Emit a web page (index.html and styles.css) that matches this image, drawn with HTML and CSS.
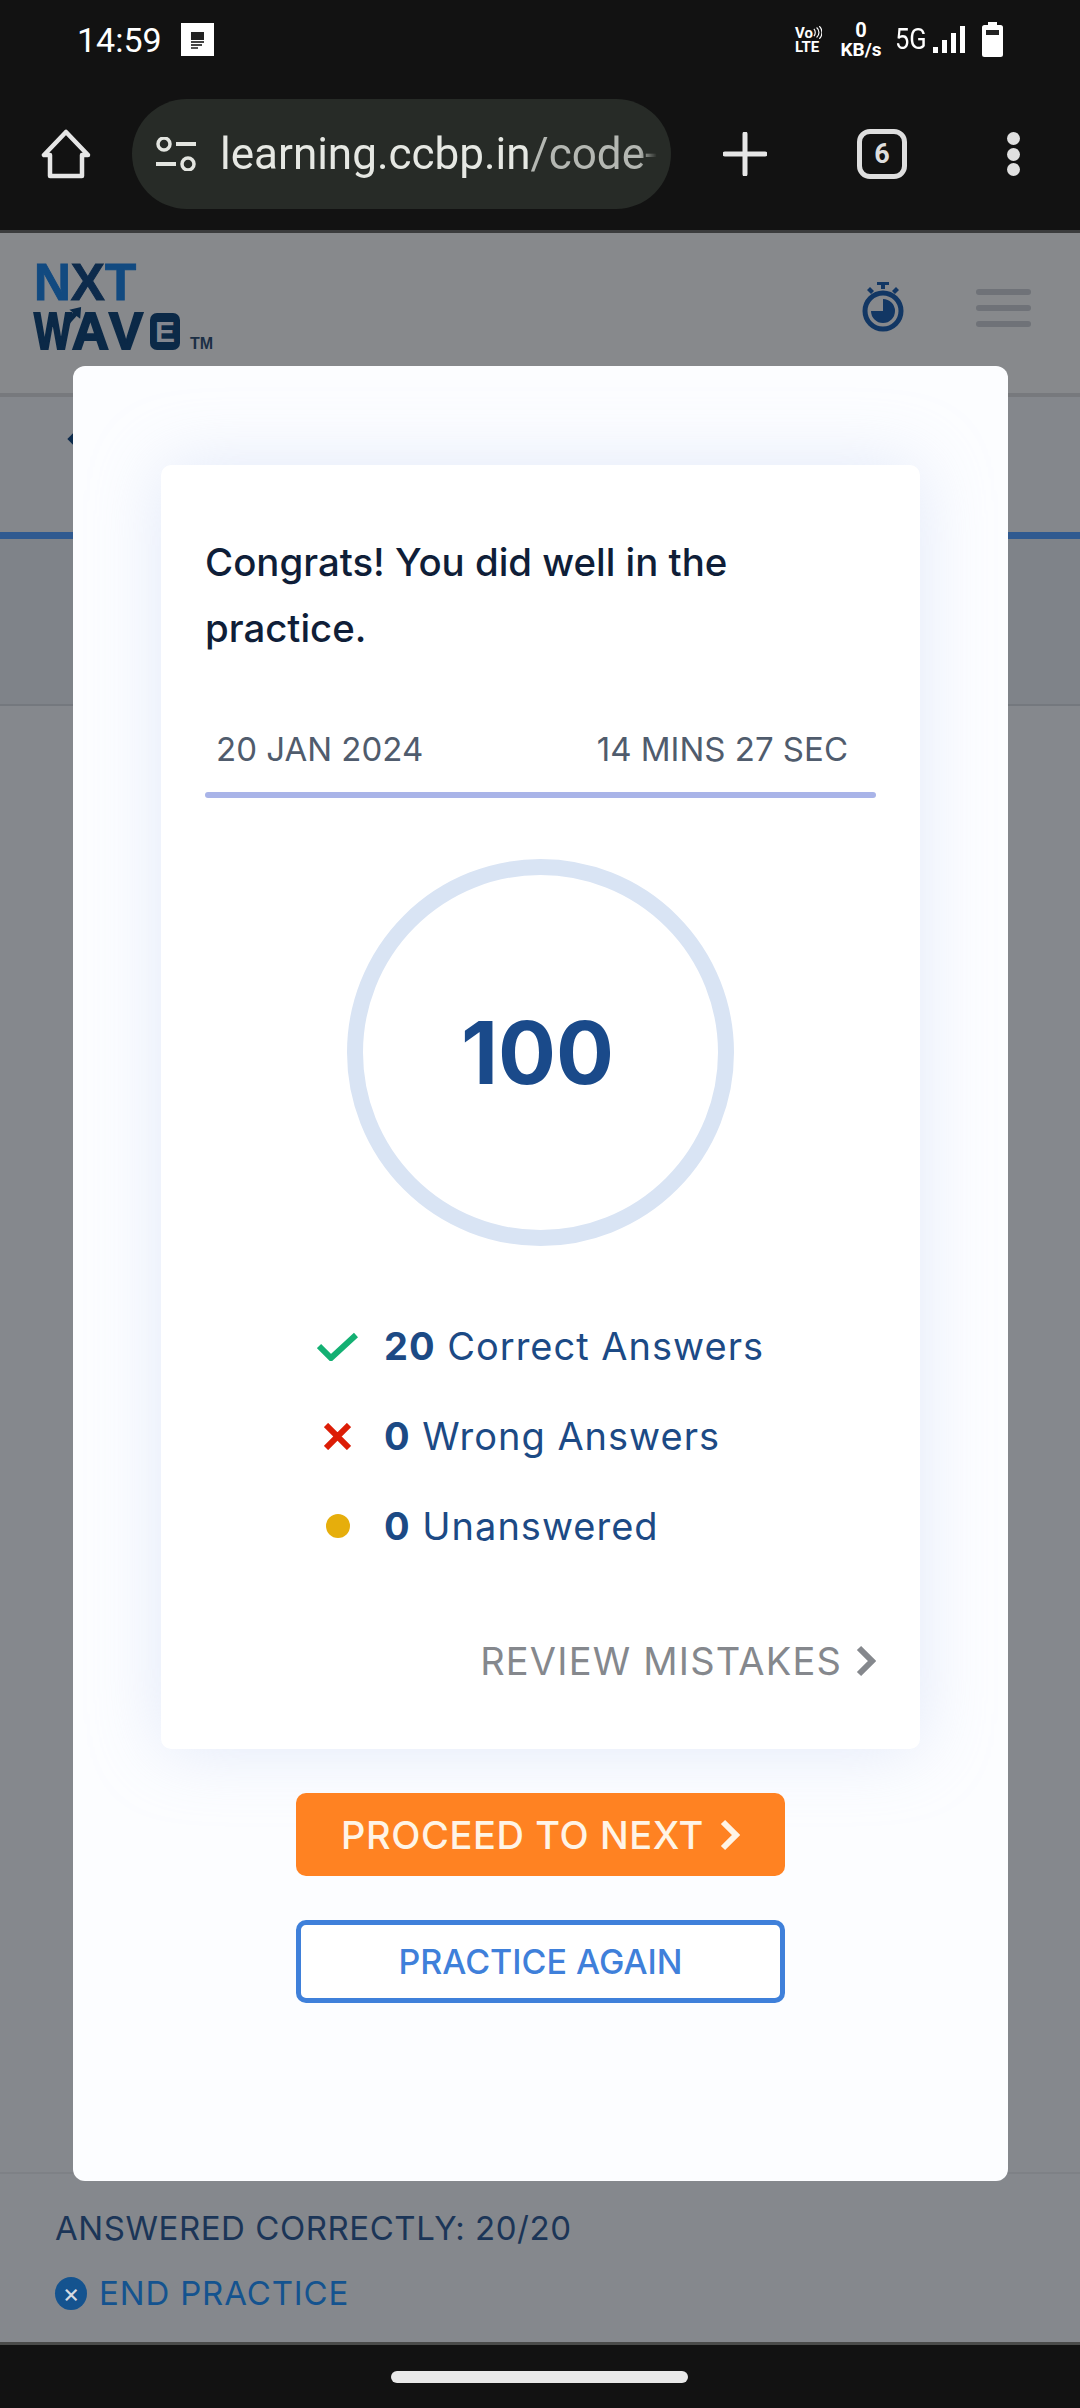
FILE: index.html
```html
<!DOCTYPE html>
<html lang="en">
<head>
    <meta charset="UTF-8">
    <title>Practice result</title>
    <link rel="stylesheet" href="styles.css">
</head>
<body>
<div class="phone">
    <div class="status-bar">
        <span class="status-time">14:59</span>
        <svg class="status-note" viewBox="0 0 33 33"><rect width="33" height="33" fill="#fff"/><rect x="10" y="9" width="13" height="8" fill="#222"/><rect x="10" y="18" width="13" height="2" fill="#444"/><rect x="10" y="21" width="11" height="2" fill="#444"/><rect x="10" y="24" width="7" height="2" fill="#555"/></svg>
        <div class="status-right">
            <div class="volte"><span class="volte-top">Vo<svg class="volte-waves" viewBox="0 0 10 14"><path d="M1 3c2 2 2 6 0 8M4 1.500c3.500 3 3.500 8 0 11M7 0c4 4 4 10 0 14" fill="none" stroke="#fff" stroke-width="1.300"/></svg></span><span>LTE</span></div>
            <div class="speed"><span class="speed-num">0</span><span>KB/s</span></div>
            <span class="net">5G</span>
            <div class="signal"><i class="bar bar1"></i><i class="bar bar2"></i><i class="bar bar3"></i><i class="bar bar4"></i></div>
            <svg class="battery" viewBox="0 0 21 35"><path d="M6 0h9v3h3.500a2.500 2.500 0 0 1 2.500 2.500v27a2.500 2.500 0 0 1-2.500 2.500h-16a2.500 2.500 0 0 1-2.500-2.500v-27a2.500 2.500 0 0 1 2.500-2.500h3.500z" fill="#fff"/><rect x="4" y="8" width="13" height="5" fill="#222"/></svg>
        </div>
    </div>

    <div class="toolbar">
        <svg class="home-icon" viewBox="0 0 50 50"><path d="M25 3L3 26h6v21h32V26h6z" fill="none" stroke="#e6e6e6" stroke-width="4.500" stroke-linejoin="round"/></svg>
        <div class="url-pill">
            <svg class="tune-icon" viewBox="0 0 42 34"><circle cx="9" cy="7" r="6" fill="none" stroke="#e3e5e0" stroke-width="3.500"/><rect x="21" y="5" width="20" height="4" fill="#e3e5e0"/><rect x="1" y="25" width="20" height="4" fill="#e3e5e0"/><circle cx="33" cy="27" r="6" fill="none" stroke="#e3e5e0" stroke-width="3.500"/></svg>
            <div class="url-text"><span class="url-host">learning.ccbp.in</span><span class="url-path">/code-</span></div>
        </div>
        <svg class="plus-icon" viewBox="0 0 44 44"><path d="M22 2v40M2 22h40" stroke="#e6e6e6" stroke-width="5" stroke-linecap="round"/></svg>
        <div class="tab-count">6</div>
        <div class="more-dots"><i></i><i></i><i></i></div>
    </div>

    <div class="page">
        <header class="site-header">
            <div class="logo">
                <div class="logo-nxt">N<span class="logo-x">X</span>T</div>
                <div class="logo-wave">
                    <span class="logo-w"><span class="logo-w-inner">W</span></span><span class="logo-a">A</span><span class="logo-v">V</span><span class="logo-e">E</span><span class="logo-tm">TM</span>
                    <svg class="logo-arrow" viewBox="0 0 20 20"><path d="M19 0l-1 13-4-3-8 9-5-3 9-10-4-3z" fill="#0b2947"/></svg>
                </div>
            </div>
            <div class="header-actions">
                <svg class="timer-icon" viewBox="0 0 42 50"><path d="M15 0h12v3h-4v4h-4V3h-4z" fill="#123764"/><path d="M5 8l3-3 4 4-3 3zM37 8l-3-3-4 4 3 3z" fill="#123764"/><circle cx="21" cy="29" r="18" fill="none" stroke="#123764" stroke-width="5"/><path d="M21 17a12 12 0 1 1-12 12h12z" fill="#123764"/></svg>
                <div class="menu-icon"><i></i><i></i><i></i></div>
            </div>
        </header>
        <div class="sub-bar"><span class="back-arrow"></span></div>
        <div class="question-bar"></div>
        <div class="page-body"></div>
        <footer class="page-footer">
            <div class="footer-score">ANSWERED CORRECTLY: 20/20</div>
            <div class="end-practice">
                <span class="end-icon">×</span>
                <span>END PRACTICE</span>
            </div>
        </footer>

        <div class="modal">
            <div class="result-card">
                <p class="result-title">Congrats! You did well in the practice.</p>
                <div class="result-meta">
                    <span>20 JAN 2024</span>
                    <span>14 MINS 27 SEC</span>
                </div>
                <div class="score-ring">100</div>
                <ul class="stats">
                    <li class="stat">
                        <span class="stat-icon"><svg class="icon-check" viewBox="0 0 41 29"><path d="M2 14l12 12L39 3" fill="none" stroke="#14b073" stroke-width="6"/></svg></span>
                        <span><b>20</b> Correct Answers</span>
                    </li>
                    <li class="stat">
                        <span class="stat-icon"><svg class="icon-cross" viewBox="0 0 27 27"><path d="M2 2l23 23M25 2L2 25" fill="none" stroke="#dc1d06" stroke-width="6"/></svg></span>
                        <span><b>0</b> Wrong Answers</span>
                    </li>
                    <li class="stat">
                        <span class="stat-icon"><span class="icon-dot"></span></span>
                        <span><b>0</b> Unanswered</span>
                    </li>
                </ul>
                <div class="review-link">
                    <span>REVIEW MISTAKES</span>
                    <svg class="chevron" viewBox="0 0 20 32"><path d="M3 3l13 13L3 29" fill="none" stroke="#85888d" stroke-width="6"/></svg>
                </div>
            </div>
            <button class="btn btn-next">PROCEED TO NEXT <svg class="chevron" viewBox="0 0 20 32"><path d="M3 3l13 13L3 29" fill="none" stroke="#fff4e6" stroke-width="6"/></svg></button>
            <button class="btn btn-again">PRACTICE AGAIN</button>
        </div>
    </div>

    <div class="nav-bar"><div class="nav-handle"></div></div>
</div>
</body>
</html>
```

FILE: styles.css
```css
html, body {
    margin: 0;
    padding: 0;
    background-color: #121212;
}

.phone {
    width: 1080px;
    height: 2408px;
    display: flex;
    flex-direction: column;
    overflow: hidden;
    font-family: Inter, "Noto Sans", sans-serif;
}

/* status bar */
.status-bar {
    height: 78px;
    display: flex;
    align-items: center;
    padding: 0 77px;
    color: #fff;
    font-family: Roboto, sans-serif;
    box-sizing: border-box;
}

.status-time {
    font-size: 34px;
    line-height: 33px;
    margin-top: 2px;
}

.status-note {
    width: 33px;
    height: 33px;
    margin-left: 19px;
    margin-top: 1px;
}

.status-right {
    margin-left: auto;
    display: flex;
    align-items: center;
}

.volte {
    width: 29px;
    display: flex;
    flex-direction: column;
    font-size: 15px;
    line-height: 14px;
    font-weight: 700;
    margin-top: 1px;
}

.volte-top {
    display: flex;
    align-items: center;
}

.volte-waves {
    width: 9px;
    height: 13px;
}

.speed {
    width: 42px;
    margin-left: 16px;
    display: flex;
    flex-direction: column;
    align-items: center;
    font-size: 19px;
    line-height: 18px;
    font-weight: 700;
    margin-top: 1px;
}

.speed-num {
    font-size: 20px;
    line-height: 21px;
}

.net {
    margin-left: 13px;
    font-size: 29px;
    transform: scaleX(0.88);
    transform-origin: left center;
    width: 38px;
}

.signal {
    display: flex;
    align-items: flex-end;
    gap: 4px;
    height: 28px;
    width: 32px;
}

.bar {
    width: 5px;
    background: #fff;
}

.bar1 { height: 6px; }
.bar2 { height: 13px; }
.bar3 { height: 20px; }
.bar4 { height: 27px; }

.battery {
    width: 21px;
    height: 35px;
    margin-left: 17px;
}

/* browser toolbar */
.toolbar {
    height: 155px;
    display: flex;
    align-items: center;
    box-sizing: border-box;
    border-bottom: 3px solid #3b3c3d;
}

.home-icon {
    width: 50px;
    height: 50px;
    margin-left: 41px;
}

.url-pill {
    width: 539px;
    height: 110px;
    margin-left: 41px;
    border-radius: 55px;
    background: #272b27;
    display: flex;
    align-items: center;
    box-sizing: border-box;
    padding-left: 23px;
}

.tune-icon {
    width: 42px;
    height: 34px;
    flex-shrink: 0;
}

.url-text {
    margin-left: 23px;
    white-space: nowrap;
    font-family: Roboto, sans-serif;
    font-size: 44px;
    -webkit-mask-image: linear-gradient(to right, #000 96%, transparent);
    mask-image: linear-gradient(to right, #000 96%, transparent);
}

.url-host {
    color: #e6e8e3;
}

.url-path {
    color: #b4b7b2;
}

.plus-icon {
    width: 44px;
    height: 44px;
    margin-left: 52px;
}

.tab-count {
    width: 50px;
    height: 50px;
    margin-left: 90px;
    box-sizing: border-box;
    border: 5px solid #dedede;
    border-radius: 13px;
    color: #dedede;
    font-family: Roboto, sans-serif;
    font-weight: 700;
    font-size: 27px;
    display: flex;
    align-items: center;
    justify-content: center;
}

.more-dots {
    margin-left: 100px;
    height: 44px;
    display: flex;
    flex-direction: column;
    justify-content: space-between;
}

.more-dots i {
    width: 13px;
    height: 13px;
    border-radius: 50%;
    background: #e0e0e0;
}

/* dimmed page behind the modal */
.page {
    position: relative;
    height: 2112px;
    box-sizing: border-box;
    display: flex;
    flex-direction: column;
    background: #85888d;
    border-bottom: 3px solid #4a4b4a;
    color: #1d3557;
}

.site-header {
    height: 164px;
    box-sizing: border-box;
    padding: 31px 49px 0 34px;
    display: flex;
    justify-content: space-between;
    background: #87898c;
    border-bottom: 4px solid #77797d;
}

.logo {
    display: flex;
    flex-direction: column;
    gap: 11px;
    font-family: "Liberation Sans", sans-serif;
    font-weight: 700;
    font-size: 51px;
}

.logo-nxt {
    height: 38px;
    line-height: 38px;
    color: #124a80;
    -webkit-text-stroke: 1px #124a80;
}

.logo-x {
    color: #0d2b4c;
    -webkit-text-stroke: 1px #0d2b4c;
}

.logo-wave {
    position: relative;
    height: 37px;
    line-height: 37px;
    display: flex;
    color: #0b2947;
    -webkit-text-stroke: 2px #0b2947;
}

.logo-w {
    width: 38px;
}

.logo-w-inner {
    display: inline-block;
    transform: scaleX(0.78);
    transform-origin: left center;
}

.logo-a {
    width: 37px;
}

.logo-v {
    width: 41px;
}

.logo-e {
    width: 30px;
    height: 37px;
    border-radius: 7px;
    background: #0b2947;
    color: #838790;
    -webkit-text-stroke: 0;
    font-size: 30px;
    text-align: center;
}

.logo-tm {
    margin-left: 10px;
    margin-top: 12px;
    font-size: 16px;
    -webkit-text-stroke: 0;
    color: #1b2f45;
}

.logo-arrow {
    position: absolute;
    left: 30px;
    top: -6px;
    width: 18px;
    height: 18px;
}

.header-actions {
    display: flex;
    gap: 72px;
    padding-top: 18px;
}

.timer-icon {
    width: 42px;
    height: 50px;
}

.menu-icon {
    width: 55px;
    height: 38px;
    margin-top: 7px;
    display: flex;
    flex-direction: column;
    justify-content: space-between;
}

.menu-icon i {
    height: 6px;
    border-radius: 3px;
    background: #6f7278;
}

.sub-bar {
    height: 97px;
    flex-shrink: 0;
    background: #84878c;
    padding: 38px 0 0 69px;
    border-bottom: 7px solid #305a90;
}

.back-arrow {
    display: block;
    width: 8px;
    height: 8px;
    background: #0d2b4c;
    transform: rotate(45deg);
}

.question-bar {
    height: 165px;
    flex-shrink: 0;
    background: #7f8389;
    border-bottom: 2px solid #74787e;
}

.page-body {
    flex: 1;
    background: #85888d;
}

.page-footer {
    height: 170px;
    box-sizing: border-box;
    padding: 34px 0 0 55px;
    background: #85888d;
    border-top: 2px solid #7e8186;
}

.footer-score {
    font-size: 33px;
    line-height: 40px;
    letter-spacing: 0.550px;
    color: #1b3557;
}

.end-practice {
    margin-top: 25px;
    display: flex;
    align-items: center;
    gap: 12px;
    font-size: 33px;
    letter-spacing: 0.850px;
    color: #14538f;
}

.end-icon {
    width: 32px;
    height: 33px;
    border-radius: 50%;
    background: #14538f;
    color: #d6dbe2;
    font-size: 26px;
    line-height: 32px;
    text-align: center;
    letter-spacing: 0;
}

/* modal */
.modal {
    position: absolute;
    left: 73px;
    top: 133px;
    width: 935px;
    height: 1815px;
    box-sizing: border-box;
    padding-top: 99px;
    border-radius: 12px;
    background: #fcfdff;
    display: flex;
    flex-direction: column;
    align-items: center;
}

.result-card {
    width: 759px;
    height: 1284px;
    box-sizing: border-box;
    padding: 64px 44px 0;
    border-radius: 10px;
    background: #fff;
    box-shadow: 0 0 70px rgba(190, 205, 240, 0.4);
}

.result-title {
    margin: 0;
    font-size: 38.400px;
    font-weight: 500;
    line-height: 66px;
    color: #0f1e38;
}

.result-meta {
    margin-top: 66px;
    padding: 0 28px 27px 11px;
    display: flex;
    justify-content: space-between;
    font-size: 33px;
    line-height: 44px;
    color: #505c6d;
    position: relative;
}

.result-meta::after {
    content: "";
    position: absolute;
    left: 0;
    right: 0;
    bottom: 0;
    height: 6px;
    border-radius: 3px;
    background: #a9b4e8;
}

.score-ring {
    width: 387px;
    height: 387px;
    margin: 61px auto 0;
    box-sizing: border-box;
    border: 16px solid #d9e4f4;
    border-radius: 50%;
    display: flex;
    align-items: center;
    justify-content: center;
    padding-right: 6px;
    font-size: 86px;
    font-weight: 700;
    color: #1a4a8a;
}

.stats {
    list-style: none;
    margin: 55px 0 0;
    padding: 0 0 0 112px;
}

.stat {
    height: 90px;
    display: flex;
    align-items: center;
    font-size: 38px;
    letter-spacing: 1px;
    color: #1c4a85;
}

.stat b {
    font-weight: 700;
}

.stat-icon {
    width: 41px;
    margin-right: 26px;
    display: flex;
    justify-content: center;
}

.icon-check {
    width: 41px;
    height: 29px;
}

.icon-cross {
    width: 27px;
    height: 27px;
}

.icon-dot {
    width: 24px;
    height: 24px;
    border-radius: 50%;
    background: #e6ae0c;
}

.review-link {
    margin-top: 67px;
    display: flex;
    justify-content: flex-end;
    align-items: center;
    gap: 14px;
    font-size: 38px;
    letter-spacing: 1.200px;
    color: #85888d;
}

.chevron {
    width: 20px;
    height: 32px;
}

.btn {
    width: 489px;
    height: 83px;
    box-sizing: border-box;
    border-radius: 10px;
    font-family: Inter, sans-serif;
    display: flex;
    align-items: center;
    justify-content: center;
}

.btn-next {
    margin-top: 44px;
    border: none;
    gap: 16px;
    background: #ff8222;
    color: #fff4e6;
    font-size: 38px;
    letter-spacing: 0.600px;
    font-weight: 500;
}

.btn-again {
    margin-top: 44px;
    border: 5px solid #3f80da;
    background: #fff;
    color: #3f80da;
    font-size: 34px;
    font-weight: 500;
}

/* android nav bar */
.nav-bar {
    flex: 1;
    display: flex;
    justify-content: center;
    padding-top: 26px;
    box-sizing: border-box;
}

.nav-handle {
    width: 297px;
    height: 12px;
    border-radius: 6px;
    background: #e8e8e8;
    margin-left: -1px;
}
```
